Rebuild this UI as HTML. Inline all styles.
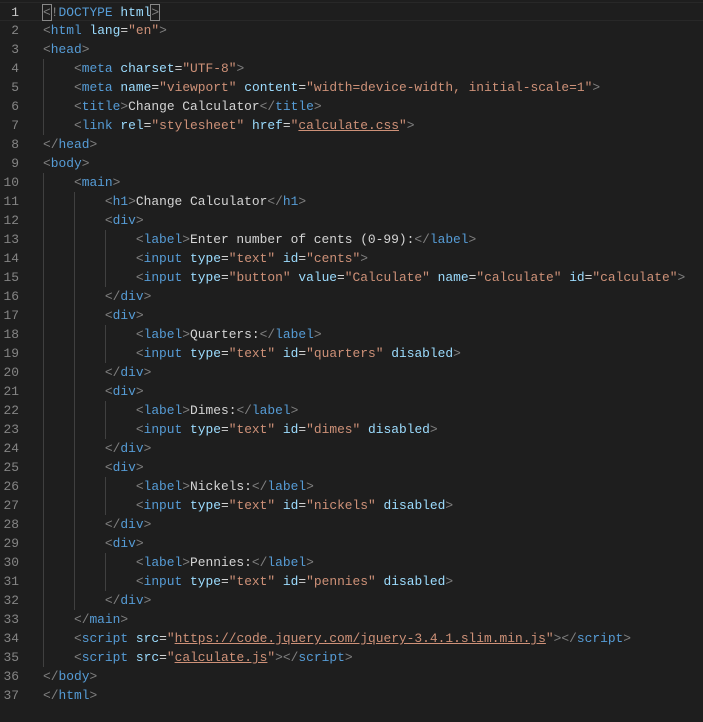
<!DOCTYPE html>
<html><head><style>
body{margin:0;background:#1e1e1e;width:703px;height:722px;overflow:hidden;position:relative;font-family:"Liberation Mono",monospace;font-size:12.9px}
.l{position:absolute;left:0;height:19px;line-height:19px;width:703px;white-space:pre}
.n{position:absolute;left:0;width:19px;text-align:right;color:#858585}
.c{position:absolute;left:43px;color:#d4d4d4}
.t{color:#569cd6}.b{color:#808080}.a{color:#9cdcfe}.s{color:#ce9178}.u{text-decoration:underline}
.cur{border-top:1px solid #282828;border-bottom:1px solid #282828;box-sizing:border-box}
.g{position:absolute;width:1px;background:#404040}
</style></head><body>
<div class="l cur" style="top:2px"><span class="n" style="color:#c6c6c6">1</span><span class="c"><span class="b" style="outline:1px solid #888">&lt;</span><span class="b">!</span><span class="t">DOCTYPE</span> <span class="a">html</span><span class="b" style="outline:1px solid #888">&gt;</span></span></div>
<div class="l" style="top:21px"><span class="n">2</span><span class="c"><span class="b">&lt;</span><span class="t">html</span> <span class="a">lang</span>=<span class="s">"en"</span><span class="b">&gt;</span></span></div>
<div class="l" style="top:40px"><span class="n">3</span><span class="c"><span class="b">&lt;</span><span class="t">head</span><span class="b">&gt;</span></span></div>
<div class="l" style="top:59px"><span class="n">4</span><span class="c">    <span class="b">&lt;</span><span class="t">meta</span> <span class="a">charset</span>=<span class="s">"UTF-8"</span><span class="b">&gt;</span></span></div>
<div class="l" style="top:78px"><span class="n">5</span><span class="c">    <span class="b">&lt;</span><span class="t">meta</span> <span class="a">name</span>=<span class="s">"viewport"</span> <span class="a">content</span>=<span class="s">"width=device-width, initial-scale=1"</span><span class="b">&gt;</span></span></div>
<div class="l" style="top:97px"><span class="n">6</span><span class="c">    <span class="b">&lt;</span><span class="t">title</span><span class="b">&gt;</span>Change Calculator<span class="b">&lt;/</span><span class="t">title</span><span class="b">&gt;</span></span></div>
<div class="l" style="top:116px"><span class="n">7</span><span class="c">    <span class="b">&lt;</span><span class="t">link</span> <span class="a">rel</span>=<span class="s">"stylesheet"</span> <span class="a">href</span>=<span class="s">"<span class="u">calculate.css</span>"</span><span class="b">&gt;</span></span></div>
<div class="l" style="top:135px"><span class="n">8</span><span class="c"><span class="b">&lt;/</span><span class="t">head</span><span class="b">&gt;</span></span></div>
<div class="l" style="top:154px"><span class="n">9</span><span class="c"><span class="b">&lt;</span><span class="t">body</span><span class="b">&gt;</span></span></div>
<div class="l" style="top:173px"><span class="n">10</span><span class="c">    <span class="b">&lt;</span><span class="t">main</span><span class="b">&gt;</span></span></div>
<div class="l" style="top:192px"><span class="n">11</span><span class="c">        <span class="b">&lt;</span><span class="t">h1</span><span class="b">&gt;</span>Change Calculator<span class="b">&lt;/</span><span class="t">h1</span><span class="b">&gt;</span></span></div>
<div class="l" style="top:211px"><span class="n">12</span><span class="c">        <span class="b">&lt;</span><span class="t">div</span><span class="b">&gt;</span></span></div>
<div class="l" style="top:230px"><span class="n">13</span><span class="c">            <span class="b">&lt;</span><span class="t">label</span><span class="b">&gt;</span>Enter number of cents (0-99):<span class="b">&lt;/</span><span class="t">label</span><span class="b">&gt;</span></span></div>
<div class="l" style="top:249px"><span class="n">14</span><span class="c">            <span class="b">&lt;</span><span class="t">input</span> <span class="a">type</span>=<span class="s">"text"</span> <span class="a">id</span>=<span class="s">"cents"</span><span class="b">&gt;</span></span></div>
<div class="l" style="top:268px"><span class="n">15</span><span class="c">            <span class="b">&lt;</span><span class="t">input</span> <span class="a">type</span>=<span class="s">"button"</span> <span class="a">value</span>=<span class="s">"Calculate"</span> <span class="a">name</span>=<span class="s">"calculate"</span> <span class="a">id</span>=<span class="s">"calculate"</span><span class="b">&gt;</span></span></div>
<div class="l" style="top:287px"><span class="n">16</span><span class="c">        <span class="b">&lt;/</span><span class="t">div</span><span class="b">&gt;</span></span></div>
<div class="l" style="top:306px"><span class="n">17</span><span class="c">        <span class="b">&lt;</span><span class="t">div</span><span class="b">&gt;</span></span></div>
<div class="l" style="top:325px"><span class="n">18</span><span class="c">            <span class="b">&lt;</span><span class="t">label</span><span class="b">&gt;</span>Quarters:<span class="b">&lt;/</span><span class="t">label</span><span class="b">&gt;</span></span></div>
<div class="l" style="top:344px"><span class="n">19</span><span class="c">            <span class="b">&lt;</span><span class="t">input</span> <span class="a">type</span>=<span class="s">"text"</span> <span class="a">id</span>=<span class="s">"quarters"</span> <span class="a">disabled</span><span class="b">&gt;</span></span></div>
<div class="l" style="top:363px"><span class="n">20</span><span class="c">        <span class="b">&lt;/</span><span class="t">div</span><span class="b">&gt;</span></span></div>
<div class="l" style="top:382px"><span class="n">21</span><span class="c">        <span class="b">&lt;</span><span class="t">div</span><span class="b">&gt;</span></span></div>
<div class="l" style="top:401px"><span class="n">22</span><span class="c">            <span class="b">&lt;</span><span class="t">label</span><span class="b">&gt;</span>Dimes:<span class="b">&lt;/</span><span class="t">label</span><span class="b">&gt;</span></span></div>
<div class="l" style="top:420px"><span class="n">23</span><span class="c">            <span class="b">&lt;</span><span class="t">input</span> <span class="a">type</span>=<span class="s">"text"</span> <span class="a">id</span>=<span class="s">"dimes"</span> <span class="a">disabled</span><span class="b">&gt;</span></span></div>
<div class="l" style="top:439px"><span class="n">24</span><span class="c">        <span class="b">&lt;/</span><span class="t">div</span><span class="b">&gt;</span></span></div>
<div class="l" style="top:458px"><span class="n">25</span><span class="c">        <span class="b">&lt;</span><span class="t">div</span><span class="b">&gt;</span></span></div>
<div class="l" style="top:477px"><span class="n">26</span><span class="c">            <span class="b">&lt;</span><span class="t">label</span><span class="b">&gt;</span>Nickels:<span class="b">&lt;/</span><span class="t">label</span><span class="b">&gt;</span></span></div>
<div class="l" style="top:496px"><span class="n">27</span><span class="c">            <span class="b">&lt;</span><span class="t">input</span> <span class="a">type</span>=<span class="s">"text"</span> <span class="a">id</span>=<span class="s">"nickels"</span> <span class="a">disabled</span><span class="b">&gt;</span></span></div>
<div class="l" style="top:515px"><span class="n">28</span><span class="c">        <span class="b">&lt;/</span><span class="t">div</span><span class="b">&gt;</span></span></div>
<div class="l" style="top:534px"><span class="n">29</span><span class="c">        <span class="b">&lt;</span><span class="t">div</span><span class="b">&gt;</span></span></div>
<div class="l" style="top:553px"><span class="n">30</span><span class="c">            <span class="b">&lt;</span><span class="t">label</span><span class="b">&gt;</span>Pennies:<span class="b">&lt;/</span><span class="t">label</span><span class="b">&gt;</span></span></div>
<div class="l" style="top:572px"><span class="n">31</span><span class="c">            <span class="b">&lt;</span><span class="t">input</span> <span class="a">type</span>=<span class="s">"text"</span> <span class="a">id</span>=<span class="s">"pennies"</span> <span class="a">disabled</span><span class="b">&gt;</span></span></div>
<div class="l" style="top:591px"><span class="n">32</span><span class="c">        <span class="b">&lt;/</span><span class="t">div</span><span class="b">&gt;</span></span></div>
<div class="l" style="top:610px"><span class="n">33</span><span class="c">    <span class="b">&lt;/</span><span class="t">main</span><span class="b">&gt;</span></span></div>
<div class="l" style="top:629px"><span class="n">34</span><span class="c">    <span class="b">&lt;</span><span class="t">script</span> <span class="a">src</span>=<span class="s">"<span class="u">https://code.jquery.com/jquery-3.4.1.slim.min.js</span>"</span><span class="b">&gt;&lt;/</span><span class="t">script</span><span class="b">&gt;</span></span></div>
<div class="l" style="top:648px"><span class="n">35</span><span class="c">    <span class="b">&lt;</span><span class="t">script</span> <span class="a">src</span>=<span class="s">"<span class="u">calculate.js</span>"</span><span class="b">&gt;&lt;/</span><span class="t">script</span><span class="b">&gt;</span></span></div>
<div class="l" style="top:667px"><span class="n">36</span><span class="c"><span class="b">&lt;/</span><span class="t">body</span><span class="b">&gt;</span></span></div>
<div class="l" style="top:686px"><span class="n">37</span><span class="c"><span class="b">&lt;/</span><span class="t">html</span><span class="b">&gt;</span></span></div>
<div class="g" style="left:43px;top:59px;height:76px"></div>
<div class="g" style="left:43px;top:173px;height:494px"></div>
<div class="g" style="left:74px;top:192px;height:418px"></div>
<div class="g" style="left:105px;top:230px;height:57px"></div>
<div class="g" style="left:105px;top:325px;height:38px"></div>
<div class="g" style="left:105px;top:401px;height:38px"></div>
<div class="g" style="left:105px;top:477px;height:38px"></div>
<div class="g" style="left:105px;top:553px;height:38px"></div>
<div class="g" style="left:43px;top:629px;height:38px"></div>
</body></html>
